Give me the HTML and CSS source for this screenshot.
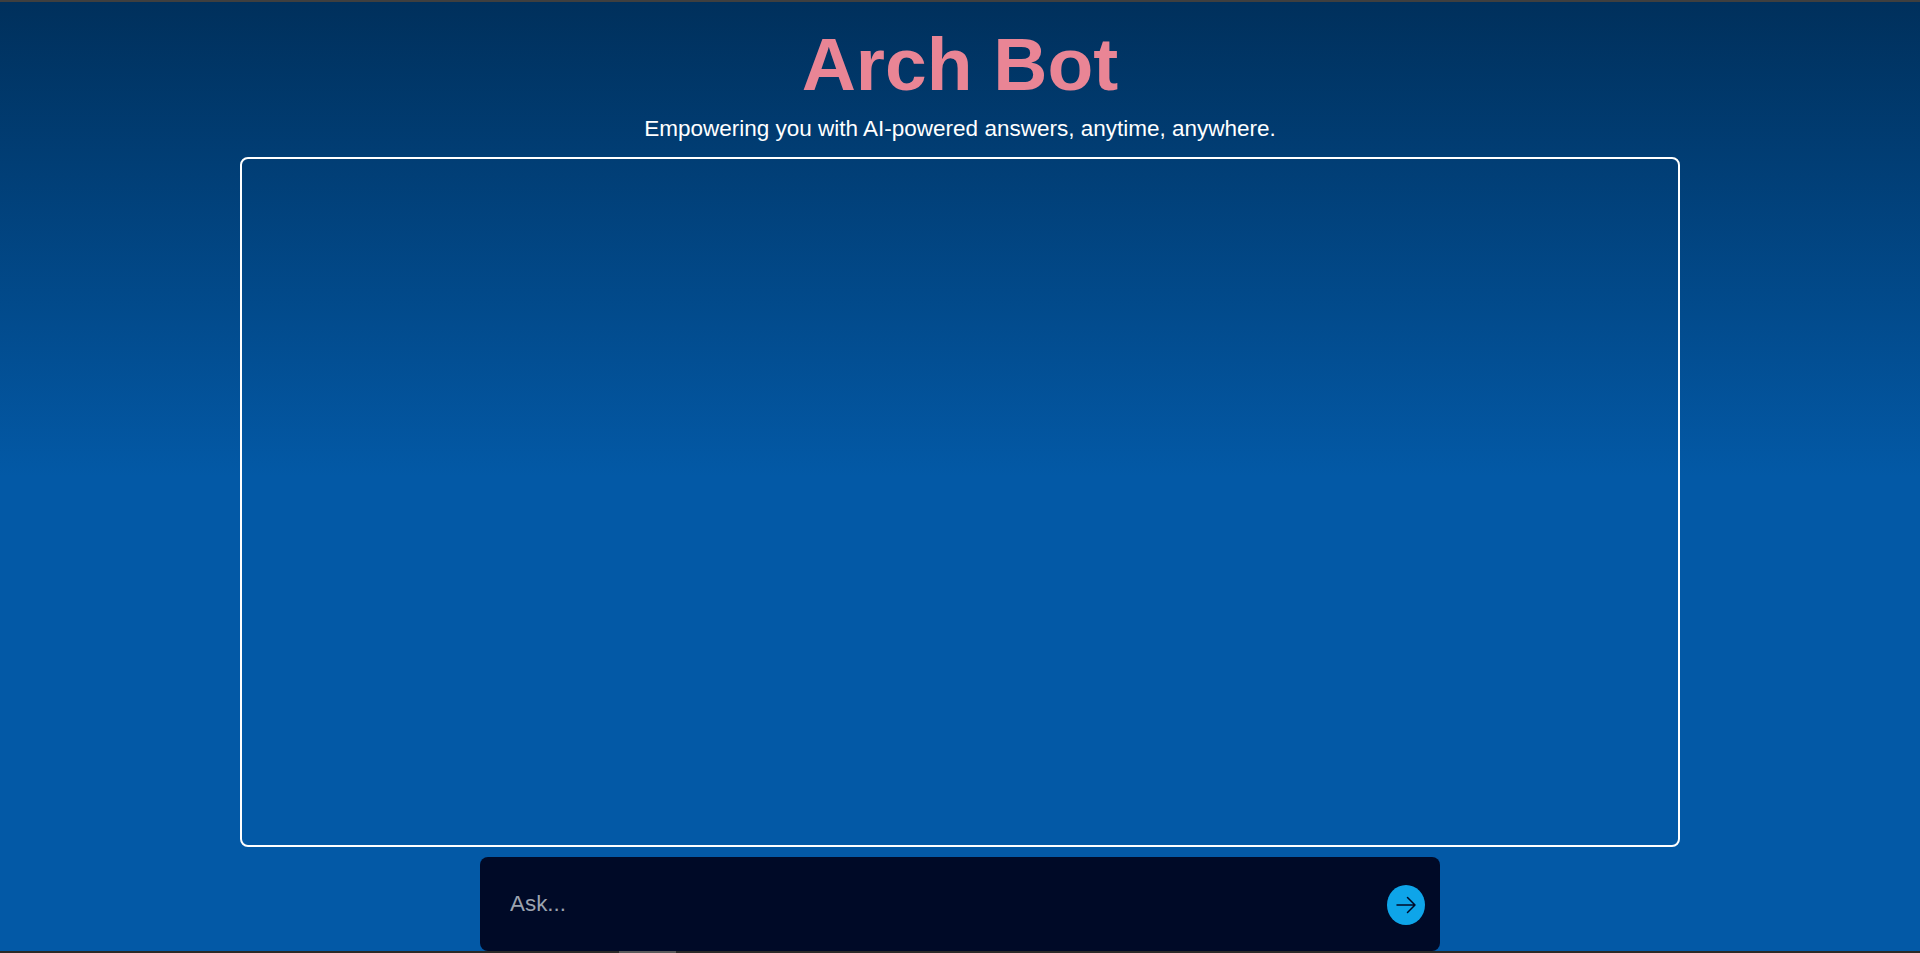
FILE: index.html
```html
<!DOCTYPE html>
<html lang="en">
<head>
<meta charset="utf-8">
<title>Arch Bot</title>
<link rel="stylesheet" href="styles.css">
</head>
<body>
<div class="topline"></div>
<main class="app">
  <h1 class="title">Arch Bot</h1>
  <p class="subtitle">Empowering you with AI-powered answers, anytime, anywhere.</p>
  <section class="chat"></section>
  <form class="ask">
    <input class="ask-input" type="text" placeholder="Ask...">
    <button class="send" type="button" aria-label="Send">
      <svg class="send-icon" viewBox="0 0 24 24" fill="none" stroke="currentColor" stroke-width="1.5" stroke-linecap="round" stroke-linejoin="round"><path d="M13.5 4.5L21 12m0 0l-7.5 7.5M21 12H3"/></svg>
    </button>
  </form>
</main>
<div class="bottombar"><div class="thumb"></div></div>
</body>
</html>
```
FILE: styles.css
```css
* { box-sizing: border-box; }
html, body { margin: 0; height: 100%; overflow: hidden; }
body {
  display: flex;
  flex-direction: column;
  height: 953px;
  font-family: "Liberation Sans", Arial, sans-serif;
  background: #0359a6;
}
.topline { height: 2px; flex: none; background: #3f3f3f; }
.app {
  flex: 1;
  min-height: 0;
  display: flex;
  flex-direction: column;
  align-items: center;
  background: linear-gradient(180deg, #00305c 0%, #0359a6 50%, #0359a6 100%);
}
.title {
  margin: 20px 0 0;
  font-size: 75px;
  line-height: 84px;
  font-weight: 700;
  color: #e98595;
}
.subtitle {
  margin: 10px 0 0;
  font-size: 22.5px;
  line-height: 26px;
  color: #fff;
}
.chat {
  width: 1440px;
  height: 690px;
  margin-top: 15px;
  border: 2px solid #fff;
  border-radius: 8px;
}
.ask {
  width: 960px;
  height: 94px;
  margin-top: 10px;
  padding: 0 15px 0 30px;
  display: flex;
  align-items: center;
  background: #000a27;
  border-radius: 8px;
}
.ask-input {
  flex: 1;
  border: 0;
  outline: 0;
  padding: 0;
  background: transparent;
  color: #fff;
  font: 22.4px "Liberation Sans", Arial, sans-serif;
}
.ask-input::placeholder { color: #9ca3af; opacity: 1; }
.send {
  width: 38px;
  height: 40px;
  margin-top: 2px;
  padding: 0;
  border: 0;
  border-radius: 50%;
  display: flex;
  align-items: center;
  justify-content: center;
  background: #0ea5e9;
  color: #000a27;
}
.send-icon { width: 24px; height: 24px; }
.bottombar { height: 2px; flex: none; background: #2b2a28; padding-left: 619px; }
.thumb { width: 57px; height: 2px; background: #5a5a5a; }
```
